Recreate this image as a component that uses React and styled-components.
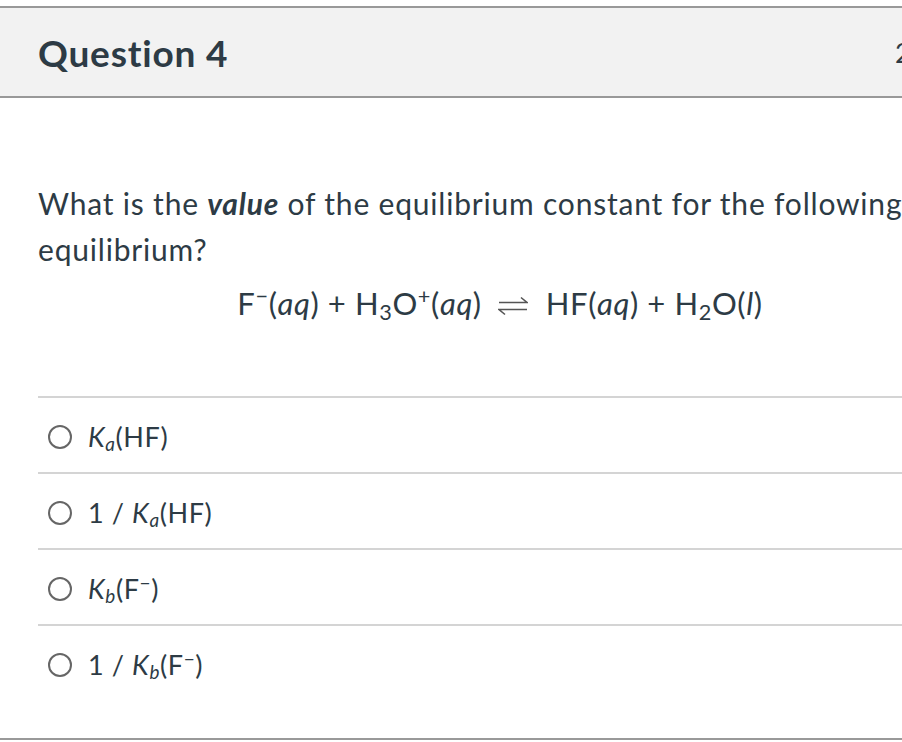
import React from "react";
import styled, { createGlobalStyle } from "styled-components";

const Global = createGlobalStyle`
  html, body { margin: 0; padding: 0; background: #fff; overflow: hidden; }
  body { font-family: Lato, "Open Sans", sans-serif; color: #2d3b45; }
`;

const Card = styled.div`
  width: 1000px;
  margin-top: 6px;
  border-top: 2px solid #999;
  border-bottom: 2px solid #999;
  padding-bottom: 38px;
`;

const Header = styled.div`
  height: 88px;
  background: #f2f2f2;
  border-bottom: 2px solid #999;
  display: flex;
  align-items: center;
  justify-content: space-between;
  padding: 0 46px 0 38px;
`;

const Title = styled.h2`
  margin: 0;
  font-size: 37px;
  font-weight: 700;
  letter-spacing: 0.8px;
  color: #2d3b45;
`;

const Points = styled.span`
  font-size: 27px;
  color: #2d3b45;
`;

const Body = styled.div`
  padding: 82px 38px 0 38px;
`;

const Prompt = styled.p`
  margin: 0;
  font-size: 30px;
  line-height: 46px;
  letter-spacing: 0.8px;
`;

const Equation = styled.div`
  margin-top: 10px;
  font-size: 31px;
  line-height: 42px;
  letter-spacing: 0.6px;
  text-align: center;
  white-space: nowrap;
`;

const Sub = styled.sub`
  font-size: 0.7em;
  vertical-align: -0.22em;
  line-height: 0;
`;

const Sup = styled.sup`
  font-size: 0.7em;
  vertical-align: 0.5em;
  line-height: 0;
`;

const Arrow = styled.svg`
  width: 30px;
  height: 20px;
  margin: 0 18px 0 16px;
  vertical-align: -1px;
`;

const Answers = styled.div`
  margin-top: 72px;
`;

const Row = styled.label`
  display: flex;
  align-items: center;
  border-top: 2px solid #d4d4d4;
  padding-left: 10px;
  padding-top: 3px;
  height: 71px;
  font-size: 27px;
  letter-spacing: 0.6px;
`;

const Radio = styled.span`
  width: 20px;
  height: 20px;
  border: 2px solid #666;
  border-radius: 50%;
  margin-right: 16px;
  flex: none;
`;

const Ital = styled.i`
  font-style: italic;
`;

function K({ s }) {
  return (
    <>
      <Ital>K</Ital>
      <Sub>
        <Ital>{s}</Ital>
      </Sub>
    </>
  );
}

const minus = "\u2212";

export default function App() {
  return (
    <>
      <Global />
      <Card>
        <Header>
          <Title>Question 4</Title>
          <Points>2 pts</Points>
        </Header>
        <Body>
          <Prompt>
            What is the <b><i>value</i></b> of the equilibrium constant for the following equilibrium?
          </Prompt>
          <Equation>
            F<Sup>{minus}</Sup>(<Ital>aq</Ital>) + H<Sub>3</Sub>O<Sup>+</Sup>(<Ital>aq</Ital>)
            <Arrow viewBox="0 0 30 20">
              <path d="M1 6.5 H29 L23 1.5" fill="none" stroke="#555" strokeWidth="1.6" />
              <path d="M29 13.5 H1 L7 18.5" fill="none" stroke="#555" strokeWidth="1.6" />
            </Arrow>
            HF(<Ital>aq</Ital>) + H<Sub>2</Sub>O(<Ital>l</Ital>)
          </Equation>
          <Answers>
            <Row>
              <Radio />
              <span><K s="a" />(HF)</span>
            </Row>
            <Row>
              <Radio />
              <span>1 / <K s="a" />(HF)</span>
            </Row>
            <Row>
              <Radio />
              <span><K s="b" />(F<Sup>{minus}</Sup>)</span>
            </Row>
            <Row>
              <Radio />
              <span>1 / <K s="b" />(F<Sup>{minus}</Sup>)</span>
            </Row>
          </Answers>
        </Body>
      </Card>
    </>
  );
}
